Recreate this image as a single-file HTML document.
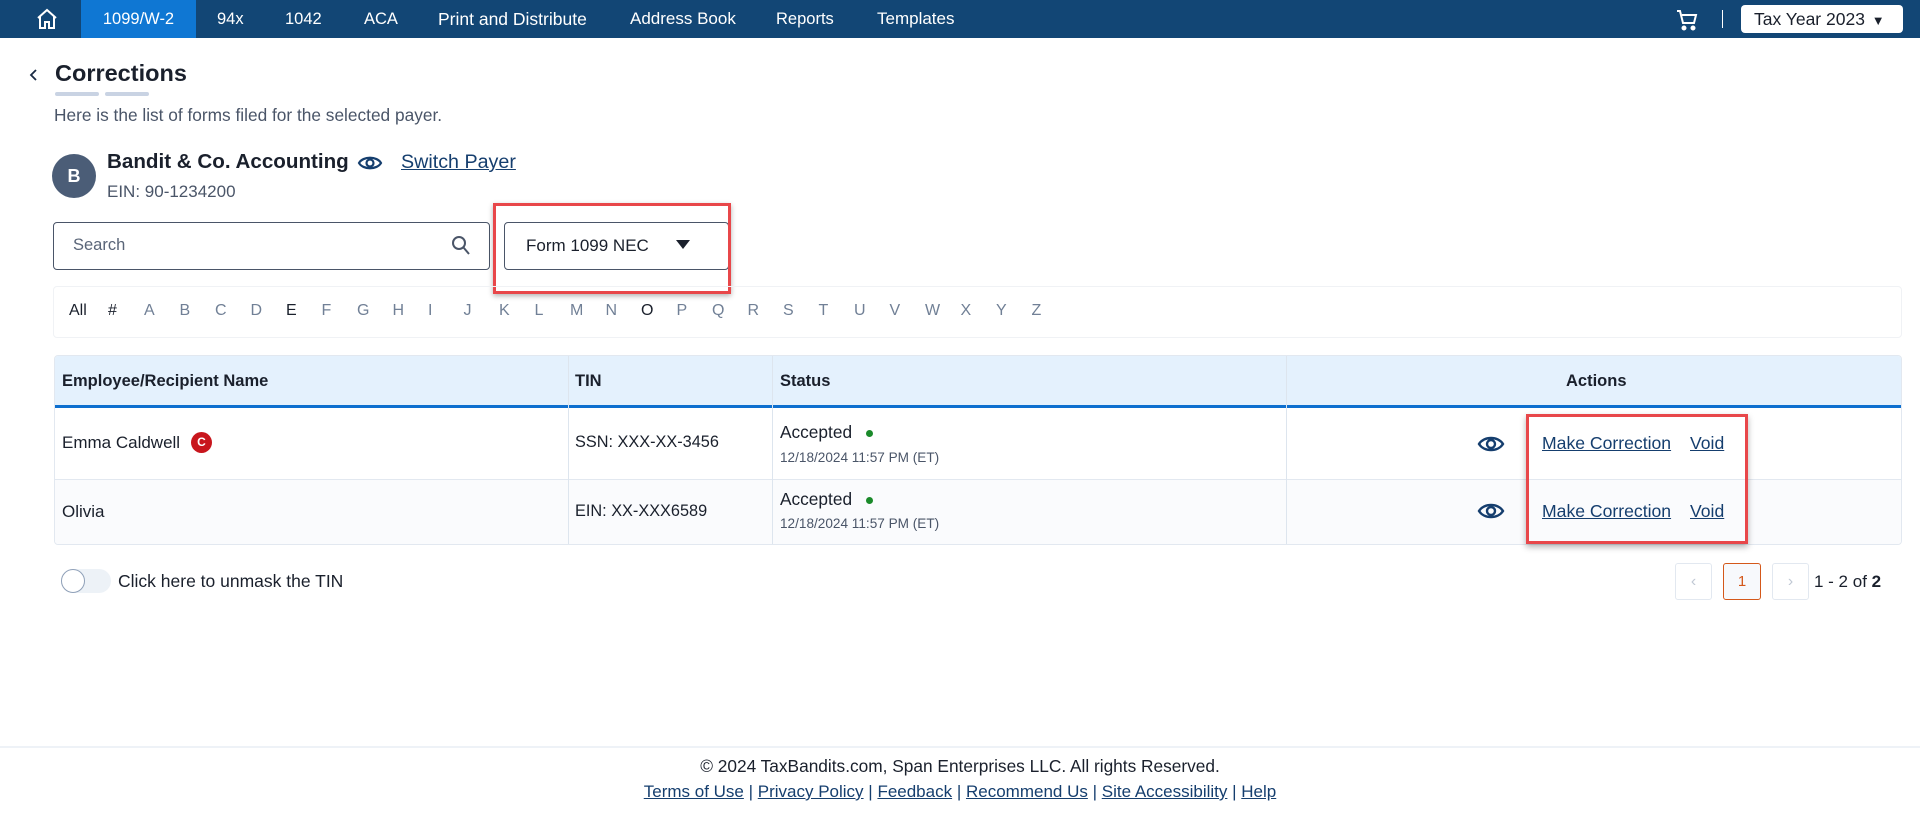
<!DOCTYPE html>
<html><head><meta charset="utf-8">
<style>
*{box-sizing:border-box;margin:0;padding:0}
body{width:1920px;height:814px;position:relative;background:#fff;font-family:"Liberation Sans",sans-serif;color:#1a202c;overflow:hidden}
.a{position:absolute;white-space:nowrap}
.nav{position:absolute;left:0;top:0;width:1920px;height:38px;background:#124675}
.nav .t{position:absolute;top:0;height:38px;line-height:38px;color:#fff;font-size:16.5px}
.lnk{color:#153e6e;text-decoration:underline}
.th{font-size:16.5px;font-weight:bold;color:#1a202c}
</style></head><body>
<div class="nav">
  <svg class="a" style="left:35px;top:7px" width="24" height="24" viewBox="0 0 24 24" fill="none" stroke="#fff" stroke-width="2"><path d="M3 11 L12 3 L21 11 M5 9 V21 H10 V15 H14 V21 H19 V9"/></svg>
  <div class="t" style="left:81px;width:115px;background:#0f77d3;text-align:center">1099/W-2</div>
  <div class="t" style="left:217px">94x</div>
  <div class="t" style="left:285px">1042</div>
  <div class="t" style="left:364px">ACA</div>
  <div class="t" style="left:438px;font-size:17.5px">Print and Distribute</div>
  <div class="t" style="left:630px;font-size:17px">Address Book</div>
  <div class="t" style="left:776px">Reports</div>
  <div class="t" style="left:877px;font-size:17px">Templates</div>
  <svg class="a" style="left:1675px;top:8px" width="24" height="24" viewBox="0 0 24 24" fill="none" stroke="#fff" stroke-width="2"><path d="M2 3h3l3 12h11l2-8H7"/><circle cx="9" cy="20" r="1.5" fill="#fff"/><circle cx="18" cy="20" r="1.5" fill="#fff"/></svg>
  <div class="a" style="left:1722px;top:10px;width:1px;height:18px;background:#fff"></div>
  <div class="a" style="left:1741px;top:5px;width:162px;height:28px;background:#fff;border-radius:4px;font-size:17.5px;line-height:28px;padding-left:13px;color:#1a202c">Tax Year 2023 <span style="font-size:13px;margin-left:2px">▼</span></div>
</div>

<svg class="a" style="left:29px;top:69px" width="10" height="12" viewBox="0 0 10 12" fill="none" stroke="#1a2a44" stroke-width="1.8"><path d="M7 1 L2 6 L7 11"/></svg>
<div class="a" style="left:55px;top:60px;font-size:23.5px;font-weight:bold;color:#1a202c">Corrections</div>
<div class="a" style="left:55px;top:92px;width:44px;height:4px;background:#c9d3e3;border-radius:2px"></div>
<div class="a" style="left:105px;top:92px;width:44px;height:4px;background:#c9d3e3;border-radius:2px"></div>
<div class="a" style="left:54px;top:105px;font-size:17.3px;color:#4a5568">Here is the list of forms filed for the selected payer.</div>

<div class="a" style="left:52px;top:154px;width:44px;height:44px;border-radius:50%;background:#4b5d77;color:#fff;font-weight:bold;font-size:18px;line-height:44px;text-align:center">B</div>
<div class="a" style="left:107px;top:150px;font-size:20.6px;font-weight:bold;color:#1a202c">Bandit &amp; Co. Accounting</div>
<svg class="a" style="left:357px;top:153px" width="26" height="20" viewBox="0 0 26 20" fill="none" stroke="#153e6e" stroke-width="2.2"><path d="M2 10 C6 3 20 3 24 10 C20 17 6 17 2 10Z"/><circle cx="13" cy="10" r="3.5"/></svg>
<div class="a lnk" style="left:401px;top:151px;font-size:19.7px">Switch Payer</div>
<div class="a" style="left:107px;top:182px;font-size:17px;color:#4a5568">EIN: 90-1234200</div>

<div class="a" style="left:53px;top:222px;width:437px;height:48px;border:1px solid #4a5568;border-radius:4px"></div>
<div class="a" style="left:73px;top:236px;font-size:16.5px;color:#5a6578">Search</div>
<svg class="a" style="left:451px;top:235px" width="20" height="22" viewBox="0 0 20 22" fill="none" stroke="#4a5568" stroke-width="2"><circle cx="8" cy="8" r="6"/><path d="M12.5 12.5 L18 19"/></svg>
<div class="a" style="left:504px;top:222px;width:225px;height:48px;border:1px solid #4a5568;border-radius:4px"></div>
<div class="a" style="left:526px;top:236px;font-size:17px;color:#1a202c">Form 1099 NEC</div>
<svg class="a" style="left:676px;top:240px" width="14" height="10" viewBox="0 0 14 10"><path d="M0 0 H14 L7 9Z" fill="#1a202c"/></svg>
<div class="a" style="left:493px;top:203px;width:238px;height:91px;border:3px solid #e8474a;box-shadow:0 2px 5px rgba(0,0,0,.3)"></div>

<div class="a" style="left:53px;top:286px;width:1849px;height:52px;border:1px solid #f0f2f5;border-radius:4px"></div>
<div class="a" style="left:69px;top:302px;font-size:16px;color:#1a202c">
<span style="position:absolute;left:0">All</span><span style="position:absolute;left:39px">#</span>
</div>
<div class="a" style="left:144px;top:302px;font-size:16px;color:#718096">
<span style="display:inline-block;width:35.5px">A</span><span style="display:inline-block;width:35.5px">B</span><span style="display:inline-block;width:35.5px">C</span><span style="display:inline-block;width:35.5px">D</span><span style="display:inline-block;width:35.5px;color:#1a202c">E</span><span style="display:inline-block;width:35.5px">F</span><span style="display:inline-block;width:35.5px">G</span><span style="display:inline-block;width:35.5px">H</span><span style="display:inline-block;width:35.5px">I</span><span style="display:inline-block;width:35.5px">J</span><span style="display:inline-block;width:35.5px">K</span><span style="display:inline-block;width:35.5px">L</span><span style="display:inline-block;width:35.5px">M</span><span style="display:inline-block;width:35.5px">N</span><span style="display:inline-block;width:35.5px;color:#1a202c">O</span><span style="display:inline-block;width:35.5px">P</span><span style="display:inline-block;width:35.5px">Q</span><span style="display:inline-block;width:35.5px">R</span><span style="display:inline-block;width:35.5px">S</span><span style="display:inline-block;width:35.5px">T</span><span style="display:inline-block;width:35.5px">U</span><span style="display:inline-block;width:35.5px">V</span><span style="display:inline-block;width:35.5px">W</span><span style="display:inline-block;width:35.5px">X</span><span style="display:inline-block;width:35.5px">Y</span><span style="display:inline-block;width:35.5px">Z</span>
</div>

<!-- table -->
<div class="a" style="left:54px;top:355px;width:1848px;height:190px;border:1px solid #e2e8f0;border-radius:4px;overflow:hidden">
  <div class="a" style="left:0;top:0;width:1848px;height:52px;background:#e4f1fd;border-bottom:3px solid #0d6fcf"></div>
  <div class="a" style="left:0;top:123px;width:1848px;height:67px;background:#fafbfd;border-top:1px solid #e2e8f0"></div>
  <div class="a" style="left:513px;top:0;width:1px;height:190px;background:#dde5ee"></div>
  <div class="a" style="left:717px;top:0;width:1px;height:190px;background:#dde5ee"></div>
  <div class="a" style="left:1231px;top:0;width:1px;height:190px;background:#dde5ee"></div>
</div>
<div class="a th" style="left:62px;top:372px">Employee/Recipient Name</div>
<div class="a th" style="left:575px;top:372px">TIN</div>
<div class="a th" style="left:780px;top:372px">Status</div>
<div class="a th" style="left:1566px;top:372px">Actions</div>

<div class="a" style="left:62px;top:433px;font-size:17px">Emma Caldwell</div>
<div class="a" style="left:191px;top:432px;width:21px;height:21px;border-radius:50%;background:#c8161d;color:#fff;font-size:12px;font-weight:bold;line-height:21px;text-align:center">C</div>
<div class="a" style="left:575px;top:433px;font-size:16.3px">SSN: XXX-XX-3456</div>
<div class="a" style="left:780px;top:422px;font-size:17.3px">Accepted</div>
<div class="a" style="left:866px;top:430px;width:7px;height:7px;border-radius:50%;background:#1a8a2a"></div>
<div class="a" style="left:780px;top:450px;font-size:13.6px;color:#4a5568">12/18/2024 11:57 PM (ET)</div>

<div class="a" style="left:62px;top:502px;font-size:17px">Olivia</div>
<div class="a" style="left:575px;top:502px;font-size:16.3px">EIN: XX-XXX6589</div>
<div class="a" style="left:780px;top:489px;font-size:17.3px">Accepted</div>
<div class="a" style="left:866px;top:497px;width:7px;height:7px;border-radius:50%;background:#1a8a2a"></div>
<div class="a" style="left:780px;top:516px;font-size:13.6px;color:#4a5568">12/18/2024 11:57 PM (ET)</div>

<svg class="a" style="left:1477px;top:434px" width="28" height="20" viewBox="0 0 28 20" fill="none" stroke="#153e6e" stroke-width="2.4"><path d="M2 10 C7 2 21 2 26 10 C21 18 7 18 2 10Z"/><circle cx="14" cy="10" r="4"/></svg>
<svg class="a" style="left:1477px;top:501px" width="28" height="20" viewBox="0 0 28 20" fill="none" stroke="#153e6e" stroke-width="2.4"><path d="M2 10 C7 2 21 2 26 10 C21 18 7 18 2 10Z"/><circle cx="14" cy="10" r="4"/></svg>
<div class="a lnk" style="left:1542px;top:433px;font-size:17.6px">Make Correction</div>
<div class="a lnk" style="left:1690px;top:433px;font-size:17.6px">Void</div>
<div class="a lnk" style="left:1542px;top:501px;font-size:17.6px">Make Correction</div>
<div class="a lnk" style="left:1690px;top:501px;font-size:17.6px">Void</div>
<div class="a" style="left:1526px;top:414px;width:222px;height:130px;border:3px solid #e8474a;box-shadow:0 3px 6px rgba(0,0,0,.3)"></div>

<!-- toggle -->
<div class="a" style="left:61px;top:569px;width:50px;height:24px;border-radius:12px;background:#edf2f7"></div>
<div class="a" style="left:61px;top:569px;width:24px;height:24px;border-radius:50%;background:#fff;border:1px solid #8fa0b8"></div>
<div class="a" style="left:118px;top:571px;font-size:17.5px;color:#1a202c">Click here to unmask the TIN</div>

<!-- pagination -->
<div class="a" style="left:1675px;top:563px;width:37px;height:37px;border:1px solid #e2e8f0;border-radius:3px;color:#c0c8d4;text-align:center;line-height:35px;font-size:16px">‹</div>
<div class="a" style="left:1723px;top:563px;width:38px;height:37px;border:1px solid #d4581a;border-radius:3px;background:#f7f9fc;color:#d4581a;text-align:center;line-height:35px;font-size:15px">1</div>
<div class="a" style="left:1772px;top:563px;width:37px;height:37px;border:1px solid #e2e8f0;border-radius:3px;color:#c0c8d4;text-align:center;line-height:35px;font-size:16px">›</div>
<div class="a" style="left:1814px;top:572px;font-size:17px;color:#1a202c">1 - 2 of <b>2</b></div>

<!-- footer -->
<div class="a" style="left:0;top:746px;width:1920px;height:2px;background:#eef2f7"></div>
<div class="a" style="left:0;top:756px;width:1920px;text-align:center;font-size:17.3px;color:#1a202c">© 2024 TaxBandits.com, Span Enterprises LLC. All rights Reserved.</div>
<div class="a" style="left:0;top:782px;width:1920px;text-align:center;font-size:17px;color:#153e6e"><span class="lnk">Terms of Use</span> | <span class="lnk">Privacy Policy</span> | <span class="lnk">Feedback</span> | <span class="lnk">Recommend Us</span> | <span class="lnk">Site Accessibility</span> | <span class="lnk">Help</span></div>
</body></html>
